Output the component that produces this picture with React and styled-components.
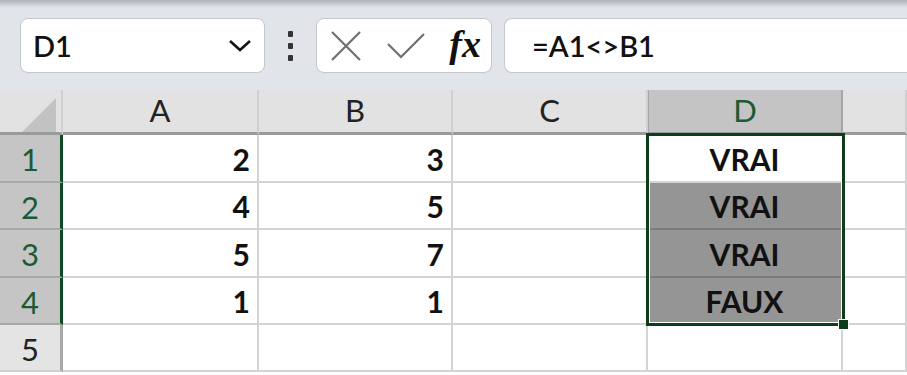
import React from 'react';
import styled, { createGlobalStyle } from 'styled-components';

const GlobalStyle = createGlobalStyle`
  html, body {
    margin: 0;
    padding: 0;
    overflow: hidden;
    background: #ffffff;
  }
  * { box-sizing: border-box; }
`;

const Page = styled.div`
  width: 907px;
  height: 375px;
  display: flex;
  flex-direction: column;
  font-family: 'Lato', 'Open Sans', sans-serif;
  background: #ffffff;
  overflow: hidden;
`;

const TopShadow = styled.div`
  height: 8px;
  flex-shrink: 0;
  background: linear-gradient(#aeb2b9, #d3d6dc 70%, #e1e4e9);
`;

const FormulaBar = styled.div`
  height: 82px;
  flex-shrink: 0;
  background: #e1e4e9;
  display: flex;
  align-items: flex-start;
  padding: 10px 0 0 20px;
`;

const Box = styled.div`
  height: 55px;
  background: #ffffff;
  border: 1px solid #c3c6cc;
  border-radius: 8px;
  display: flex;
  align-items: center;
`;

const NameBox = styled(Box)`
  width: 245px;
  padding: 0 12px 0 12px;
  justify-content: space-between;
  font-size: 29px;
  font-weight: 600;
  color: #111;
`;

const Dots = styled.div`
  width: 51px;
  height: 55px;
  display: flex;
  flex-direction: column;
  align-items: center;
  justify-content: center;
  gap: 6px;
  span {
    width: 5px;
    height: 6px;
    background: #333;
    border-radius: 1px;
  }
`;

const FxBox = styled(Box)`
  width: 176px;
  padding: 0 10px 0 13px;
  justify-content: space-between;
`;

const FxText = styled.span`
  font-family: 'Liberation Serif', 'DejaVu Serif', serif;
  font-style: italic;
  font-weight: bold;
  font-size: 38px;
  color: #111;
  line-height: 1;
  margin-top: -4px;
`;

const FormulaBox = styled(Box)`
  margin-left: 12px;
  flex: 1;
  border-right: none;
  border-radius: 8px 0 0 8px;
  padding-left: 27px;
  font-size: 29px;
  font-weight: 600;
  color: #111;
`;

const Sheet = styled.div`
  flex: 1;
  display: grid;
  grid-template-columns: 63px 196px 194px 195px 195px 1fr;
  grid-template-rows: 45px 48px 47px 48px 47px 47px 1fr;
`;

const Slot = styled.div`
  grid-row: ${p => p.$r};
  grid-column: ${p => p.$c};
`;

const Corner = styled(Slot)`
  background: #e2e2e2;
  border-right: 2px solid #d0d0d0;
  border-bottom: 3px solid #9a9a9a;
  display: flex;
  align-items: flex-end;
  justify-content: flex-end;
  padding: 0 5px 0 0;
`;

const ColHead = styled(Slot)`
  background: ${p => (p.$active ? '#c4c4c4' : '#e2e2e2')};
  color: ${p => (p.$active ? '#1c5a34' : '#222')};
  border-right: 2px solid ${p => (p.$active ? '#a6a6a6' : '#d0d0d0')};
  border-left: ${p => (p.$active ? '1px solid #a6a6a6' : 'none')};
  border-bottom: 3px solid #9a9a9a;
  font-size: 31px;
  display: flex;
  align-items: flex-end;
  justify-content: center;
  padding-bottom: 3px;
`;

const RowHead = styled(Slot)`
  background: ${p => (p.$active ? '#c5c5c5' : '#e4e4e4')};
  color: ${p => (p.$active ? '#1c5a34' : '#222')};
  border-right: 3px solid ${p => (p.$active ? '#0f4a24' : '#a8a8a8')};
  border-bottom: 2px solid ${p => (p.$active ? '#a8a8a8' : '#d0d0d0')};
  font-size: 31px;
  display: flex;
  align-items: center;
  justify-content: center;
  padding-top: 2px;
`;

const Cell = styled(Slot)`
  background: ${p => (p.$shaded ? '#959595' : '#ffffff')};
  border-right: 2px solid #d4d4d4;
  border-bottom: 2px solid ${p => (p.$shaded ? '#7c7c7c' : '#d4d4d4')};
  font-size: 30px;
  font-weight: 700;
  color: #111;
  display: flex;
  align-items: flex-end;
  justify-content: ${p => (p.$center ? 'center' : 'flex-end')};
  padding: 0 0 4px 0;
  padding-right: ${p => (p.$center ? '0' : '7px')};
`;

const Selection = styled.div`
  grid-column: 5;
  grid-row: 2 / 6;
  margin: -2px -2px -1px -2px;
  border: 3px solid #0c3d1c;
  box-shadow: inset 0 0 0 1px #ffffff;
  position: relative;
  pointer-events: none;
  z-index: 2;
`;

const FillHandle = styled.div`
  position: absolute;
  right: -7px;
  bottom: -7px;
  width: 11px;
  height: 11px;
  background: #0c3d1c;
  border: 1px solid #ffffff;
`;

const cols = ['A', 'B', 'C', 'D'];
const rows = [
  ['2', '3', '', 'VRAI'],
  ['4', '5', '', 'VRAI'],
  ['5', '7', '', 'VRAI'],
  ['1', '1', '', 'FAUX'],
  ['', '', '', ''],
];

const Chevron = () => (
  <svg width="24" height="14" viewBox="0 0 24 14">
    <path d="M2 2 L12 11 L22 2" fill="none" stroke="#111" strokeWidth="2.6" />
  </svg>
);

const Cross = () => (
  <svg width="32" height="32" viewBox="0 0 32 32">
    <path d="M2 2 L30 30 M30 2 L2 30" fill="none" stroke="#6f6f6f" strokeWidth="2.2" />
  </svg>
);

const Check = () => (
  <svg width="40" height="28" viewBox="0 0 40 28">
    <path d="M2 12 L15 25 L38 2" fill="none" stroke="#6f6f6f" strokeWidth="2.2" />
  </svg>
);

const Triangle = () => (
  <svg width="34" height="34" viewBox="0 0 34 34">
    <polygon points="0,34 34,0 34,34" fill="#c2c2c2" />
  </svg>
);

export default function App() {
  return (
    <Page>
      <GlobalStyle />
      <TopShadow />
      <FormulaBar>
        <NameBox>
          <span>D1</span>
          <Chevron />
        </NameBox>
        <Dots><span /><span /><span /></Dots>
        <FxBox>
          <Cross />
          <Check />
          <FxText>fx</FxText>
        </FxBox>
        <FormulaBox>=A1&lt;&gt;B1</FormulaBox>
      </FormulaBar>
      <Sheet>
        <Corner $r={1} $c={1}><Triangle /></Corner>
        {cols.map((c, j) => (
          <ColHead key={c} $r={1} $c={j + 2} $active={c === 'D'}>{c}</ColHead>
        ))}
        <ColHead $r={1} $c={6} />
        {rows.map((r, i) => (
          <React.Fragment key={i}>
            <RowHead $r={i + 2} $c={1} $active={i < 4}>{i + 1}</RowHead>
            {r.map((v, j) => (
              <Cell
                key={j}
                $r={i + 2}
                $c={j + 2}
                $center={j === 3}
                $shaded={j === 3 && i > 0 && i < 4}
              >
                {v}
              </Cell>
            ))}
            <Cell $r={i + 2} $c={6} />
          </React.Fragment>
        ))}
        <Selection><FillHandle /></Selection>
      </Sheet>
    </Page>
  );
}
